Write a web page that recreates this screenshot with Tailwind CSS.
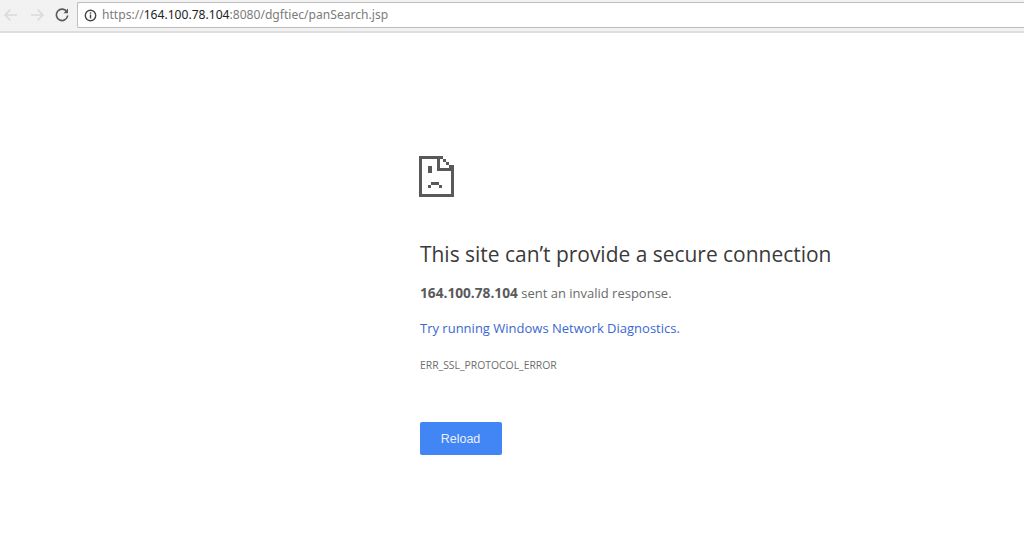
<!DOCTYPE html>
<html>
<head>
<meta charset="utf-8" />
<title>Privacy error</title>
<script src="https://cdn.jsdelivr.net/npm/@tailwindcss/browser@4"></script>
</head>
<body class="bg-white h-[540px] w-[1024px] overflow-hidden font-['Open_Sans',sans-serif]">
  <!-- toolbar -->
  <div class="h-[33px] bg-[#f2f2f2] border-b-[2px] border-[#dedede] flex items-start">
    <div class="flex items-center h-[30px] pl-[3px] gap-[7px] w-[77px]">
      <svg class="w-[16px] h-[16px]" viewBox="0 0 16 16" fill="none" stroke="#dadada" stroke-width="1.6"><path d="M14 8H2M7.5 2.5 2 8l5.500 5.500"/></svg>
      <svg class="w-[16px] h-[16px] ml-[3px]" viewBox="0 0 16 16" fill="none" stroke="#dadada" stroke-width="1.6"><path d="M2 8h12M8.500 2.500 14 8l-5.500 5.500"/></svg>
      <svg class="w-[16px] h-[16px] ml-[2px]" viewBox="0 0 16 16" fill="none" stroke="#5a5a5a" stroke-width="1.700"><path d="M13 5a5.700 5.700 0 1 0 .7 3.500"/><path d="M14 1.500V6.300H9.500z" fill="#5a5a5a" stroke="none"/></svg>
    </div>
    <div class="flex-1 mt-[2px] h-[26px] bg-white border border-[#bdbdbd] border-r-0 rounded-l-[2px] flex items-center pl-[6px] text-[12.100px] font-['Noto_Sans',sans-serif]">
      <svg class="w-[13px] h-[13px] mr-[5px]" viewBox="0 0 14 14" fill="none" stroke="#444" stroke-width="1.500"><circle cx="7" cy="7" r="5.600"/><path d="M7 6v4.200M7 3.500v1.500"/></svg>
      <span class="text-[#7b7b7b]">https://</span><span class="text-[#222]">164.100.78.104</span><span class="text-[#7b7b7b]">:8080/dgftiec/panSearch.jsp</span>
    </div>
  </div>
  <!-- error page -->
  <main class="pl-[420px] pt-[123px]">
    <svg class="w-[35px] h-[41px] block -ml-[1px]" viewBox="0 0 35 41" fill="#595959" shape-rendering="crispEdges">
      <path d="M0 0h18v3H3v35h29V15h3v26H0z"/>
      <path d="M21 0h3v3h-3zM24 3h3v3h-3zM27 6h3v3h-3zM30 9h5v6h-3v-3h-2z"/>
      <path d="M18 0h3v12h11v3H18z"/>
      <path d="M9 10h4v7H9zM9 29h3v3H9zM12 26h8v3h-8zM20 29h3v3h-3z"/>
    </svg>
    <h1 class="mt-[40px] text-[20.950px] leading-[34px] text-[#3a3a3a] font-normal">This site can’t provide a secure connection</h1>
    <p class="mt-[11px] text-[13px] leading-[22px] text-[#6a6a6a]"><b class="text-[13.700px] text-[#5a5a5a] font-bold">164.100.78.104</b> sent an invalid response.</p>
    <p class="mt-[13px] text-[13px] leading-[22px] text-[#3b68cf]">Try running Windows Network Diagnostics.</p>
    <p class="mt-[18px] text-[10.400px] leading-[16px] text-[#6e6e6e]">ERR_SSL_PROTOCOL_ERROR</p>
    <button class="mt-[49px] w-[82px] h-[33px] -ml-[0.5px] pt-[1px] rounded-[2px] bg-[#4285f4] text-[#e8f0fe] text-[12.500px] font-['Liberation_Sans',sans-serif]">Reload</button>
  </main>
</body>
</html>
